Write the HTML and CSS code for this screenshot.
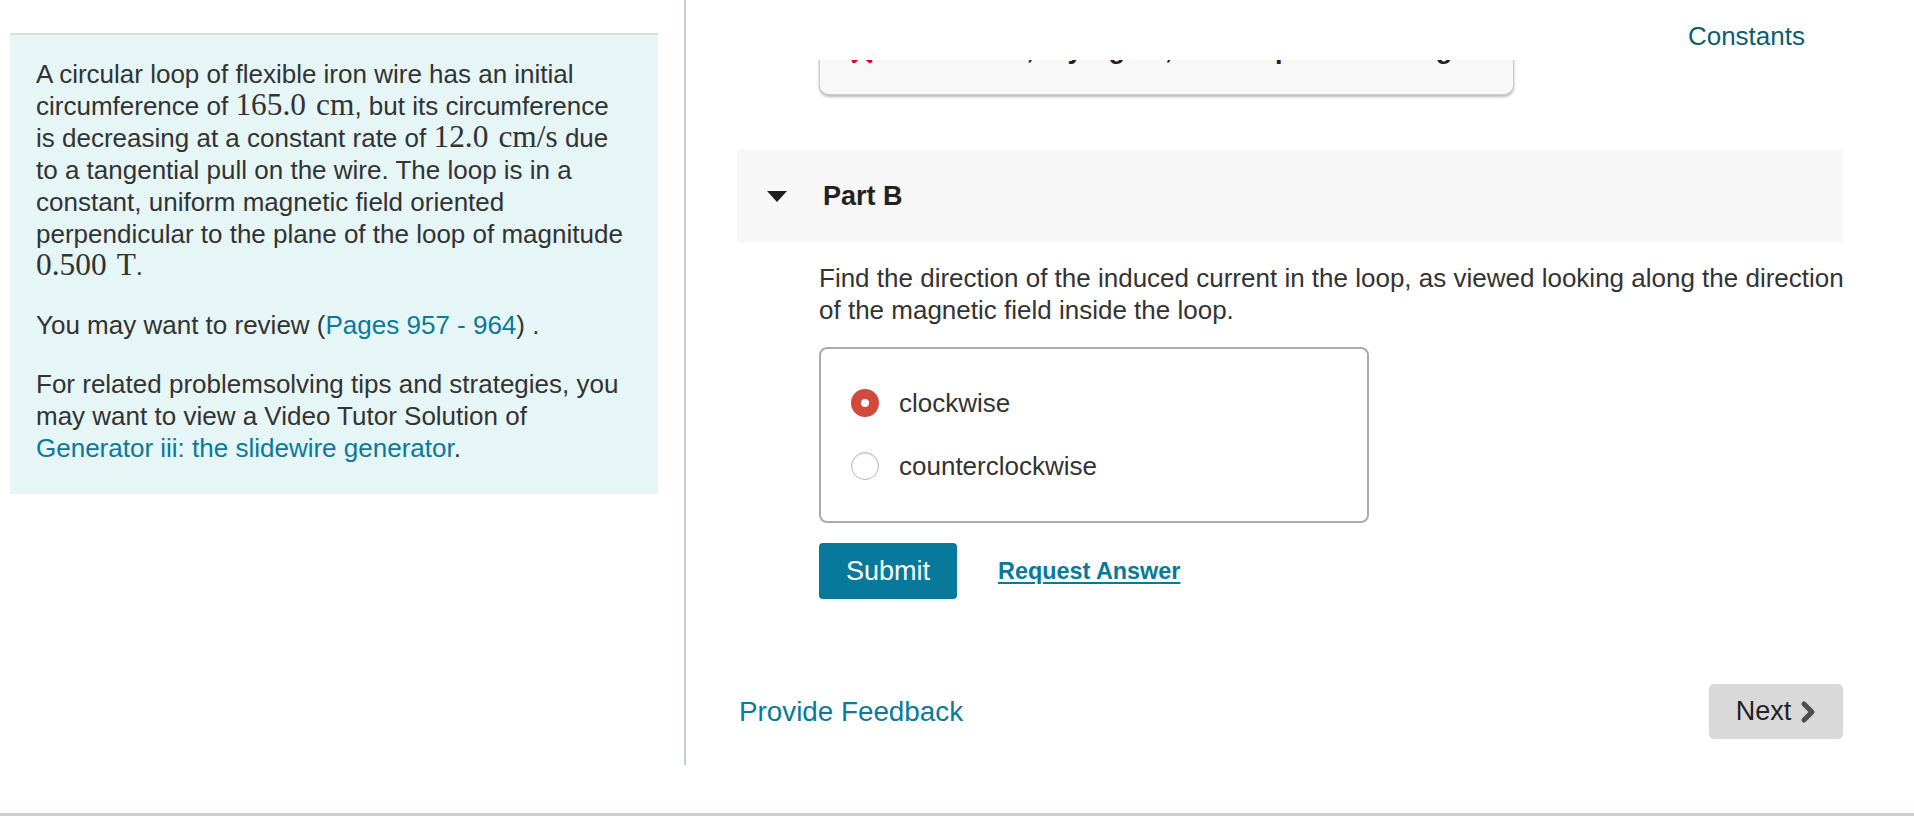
FILE: index.html
```html
<!DOCTYPE html>
<html lang="en">
<head>
<meta charset="utf-8">
<title>Part B</title>
<link rel="stylesheet" href="styles.css">
</head>
<body>
<div class="page">
  <aside class="left">
    <div class="intro">
      <p>A circular loop of flexible iron wire has an initial circumference of <span class="math">165.0<span class="unit">cm</span></span>, but its circumference is decreasing at a constant rate of <span class="math">12.0<span class="unit">cm/s</span></span> due to a tangential pull on the wire. The loop is in a constant, uniform magnetic field oriented perpendicular to the plane of the loop of magnitude <span class="math">0.500<span class="unit">T</span></span>.</p>
      <p>You may want to review (<a class="link" href="#">Pages 957 - 964</a>) .</p>
      <p>For related problemsolving tips and strategies, you may want to view a Video Tutor Solution of <a class="link" href="#">Generator iii: the slidewire generator</a>.</p>
    </div>
  </aside>
  <main class="right">
    <div class="topbar"><a class="constants" href="#">Constants</a></div>
    <div class="scroll">
      <div class="feedback-card">
        <div class="feedback-line"><svg class="x-icon" width="22" height="22" viewBox="0 0 22 22"><path d="M3 3 L19 19 M19 3 L3 19" stroke="#e3001b" stroke-width="4.5" stroke-linecap="round" fill="none"/></svg><span class="feedback-text">Incorrect; Try Again; 5 attempts remaining</span></div>
      </div>
      <section class="part">
        <div class="part-head"><span class="caret"></span><h2 class="part-title">Part B</h2></div>
        <div class="part-body">
          <p class="prompt">Find the direction of the induced current in the loop, as viewed looking along the direction of the magnetic field inside the loop.</p>
          <div class="choices">
            <label class="choice"><span class="radio radio-checked"></span><span class="choice-text">clockwise</span></label>
            <label class="choice"><span class="radio"></span><span class="choice-text">counterclockwise</span></label>
          </div>
          <div class="actions">
            <button class="submit" type="button">Submit</button>
            <a class="request" href="#">Request Answer</a>
          </div>
        </div>
      </section>
      <div class="footer-row">
        <a class="provide" href="#">Provide Feedback</a>
        <button class="next" type="button"><span>Next</span><svg class="chev" width="16" height="24" viewBox="0 0 16 24"><path d="M4 4 L12 12 L4 20" stroke="#4d4d4d" stroke-width="5" stroke-linecap="round" stroke-linejoin="round" fill="none"/></svg></button>
      </div>
    </div>
  </main>
</div>
<div class="bottom-rule"></div>
</body>
</html>
```

FILE: styles.css
```css
html, body {
  margin: 0;
  padding: 0;
  background: #ffffff;
}

body {
  font-family: "Liberation Sans", Arial, Helvetica, sans-serif;
  font-size: 26px;
  line-height: 32px;
  color: #333333;
  width: 1914px;
  height: 822px;
  overflow: hidden;
}

.page {
  display: flex;
  height: 765px;
}

.left {
  width: 684px;
  flex: none;
  border-right: 2px solid #bfd1e0;
}

.intro {
  margin: 33px 0 0 10px;
  width: 648px;
  box-sizing: border-box;
  border-top: 2px solid #dedede;
  background: #e6f5f6;
  padding: 23px 25px 30px 26px;
}

.intro p {
  margin: 0 0 27px 0;
}

.intro p:last-child {
  margin-bottom: 0;
}

.math {
  font-family: "Liberation Serif", "Times New Roman", serif;
  font-size: 31.4px;
  line-height: 26px;
  white-space: nowrap;
}

.unit {
  margin-left: 10px;
}

.link {
  color: #0a7a9b;
  text-decoration: none;
}

.right {
  flex: 1;
  min-width: 0;
  display: flex;
  flex-direction: column;
  padding: 0 71px 0 51px;
}

.topbar {
  height: 60px;
  box-sizing: border-box;
  padding: 20px 38px 0 0;
  display: flex;
  justify-content: flex-end;
  flex: none;
}

.constants {
  color: #0c5e6e;
  text-decoration: none;
}

.scroll {
  flex: 1;
  overflow: hidden;
}

.feedback-card {
  margin: -28px 0 0 82px;
  width: 695px;
  box-sizing: border-box;
  background: #f8f8f8;
  border: 1px solid #cccccc;
  border-radius: 0 0 10px 10px;
  box-shadow: 0 2px 3px rgba(0, 0, 0, 0.28);
  padding: 0 20px 29px 31px;
}

.feedback-line {
  font-size: 27px;
  font-weight: bold;
  line-height: 32px;
  color: #222222;
  white-space: nowrap;
}

.x-icon {
  vertical-align: -6px;
  margin-right: 37px;
}

.part {
  margin-top: 55px;
}

.part-head {
  height: 92px;
  background: #f7f7f7;
  display: flex;
  align-items: center;
}

.caret {
  width: 0;
  height: 0;
  margin-left: 30px;
  border-left: 10px solid transparent;
  border-right: 10px solid transparent;
  border-top: 11px solid #1f1f1f;
}

.part-title {
  margin: 0 0 0 36px;
  font-size: 27px;
  font-weight: bold;
  line-height: 32px;
  color: #222222;
}

.part-body {
  padding-left: 82px;
}

.prompt {
  margin: 20px -16px 0 0;
}

.choices {
  margin-top: 21px;
  width: 550px;
  box-sizing: border-box;
  border: 2px solid #ababab;
  border-radius: 8px;
  padding: 22px 0 24px 0;
}

.choice {
  display: flex;
  align-items: center;
  height: 63px;
  padding-left: 30px;
}

.radio {
  width: 28px;
  height: 28px;
  box-sizing: border-box;
  border-radius: 50%;
  border: 1px solid #b9b9b9;
  background: #ffffff;
  box-shadow: inset 0 1px 2px rgba(0, 0, 0, 0.12);
  margin-right: 20px;
  flex: none;
  display: flex;
  align-items: center;
  justify-content: center;
}

.radio-checked {
  border: none;
  background: #d24a3d;
  box-shadow: none;
}

.radio-checked::after {
  content: "";
  width: 8px;
  height: 8px;
  border-radius: 50%;
  background: #ffffff;
}

.actions {
  margin-top: 20px;
  display: flex;
  align-items: center;
}

.submit {
  width: 138px;
  height: 56px;
  border: none;
  border-radius: 4px;
  background: #077a9b;
  color: #ffffff;
  font-family: "Liberation Sans", Arial, Helvetica, sans-serif;
  font-size: 27px;
  padding: 0;
}

.request {
  margin-left: 41px;
  color: #077a9b;
  font-weight: bold;
  font-size: 23.4px;
  text-decoration: underline;
  text-underline-offset: 3px;
  text-decoration-thickness: 2px;
}

.footer-row {
  margin-top: 85px;
  display: flex;
  align-items: center;
  justify-content: space-between;
}

.provide {
  margin-left: 2px;
  color: #0a7a9b;
  font-size: 27.8px;
  text-decoration: none;
}

.next {
  width: 134px;
  height: 55px;
  border: none;
  border-radius: 5px;
  background: #d9d9d9;
  color: #222222;
  font-family: "Liberation Sans", Arial, Helvetica, sans-serif;
  font-size: 27px;
  padding: 0;
  display: flex;
  align-items: center;
  justify-content: center;
}

.chev {
  margin-left: 9px;
}

.bottom-rule {
  margin-top: 48px;
  height: 3px;
  background: #c9ced2;
}
```
